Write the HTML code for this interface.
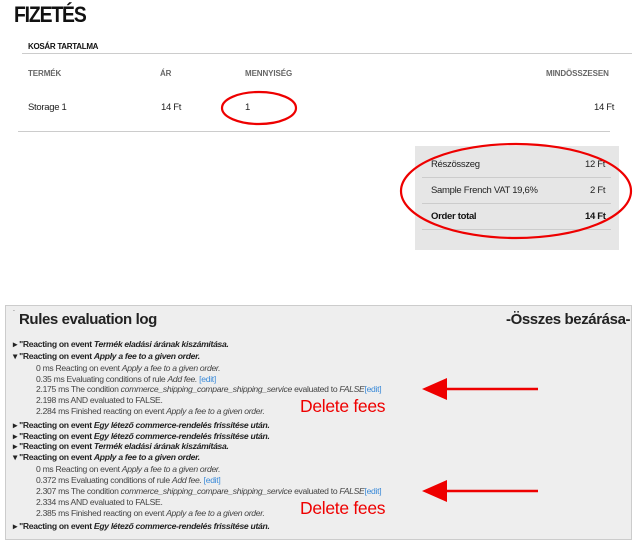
<!DOCTYPE html>
<html><head><meta charset="utf-8"><style>
body{margin:0;width:637px;height:542px;background:#fff;font-family:"Liberation Sans",sans-serif;position:relative;overflow:hidden;color:#222}
.a{position:absolute;white-space:nowrap}
.h{font-size:8px;color:#666;font-weight:bold;letter-spacing:-0.1px}
.t{font-size:9.5px;letter-spacing:-0.3px}
.l{position:absolute;height:1px;background:#ccc}
.log{font-size:8.6px;letter-spacing:-0.3px;line-height:10px}
.ev{color:#222;font-weight:bold}
.ch{color:#444}
.ed{color:#3a8ad8}
</style></head><body>
<div class="a" style="left:14px;top:2px;font-size:22px;font-weight:bold;letter-spacing:-1.3px;color:#111;transform:scaleX(0.88);transform-origin:0 0">FIZETÉS</div>
<div class="a" style="left:28px;top:42px;font-size:8px;font-weight:bold;letter-spacing:-0.3px;color:#111">KOSÁR TARTALMA</div>
<div class="l" style="left:22px;top:53px;width:610px"></div>
<div class="a h" style="left:28px;top:69px">TERMÉK</div>
<div class="a h" style="left:160px;top:69px">ÁR</div>
<div class="a h" style="left:245px;top:69px">MENNYISÉG</div>
<div class="a h" style="left:546px;top:69px">MINDÖSSZESEN</div>
<div class="a t" style="left:28px;top:102px">Storage 1</div>
<div class="a t" style="left:161px;top:102px">14 Ft</div>
<div class="a t" style="left:245px;top:102px">1</div>
<div class="a t" style="left:594px;top:102px">14 Ft</div>
<div class="l" style="left:18px;top:131px;width:592px"></div>
<div style="position:absolute;left:415px;top:146px;width:204px;height:104px;background:#e6e6e6"></div>
<div class="a t" style="left:431px;top:159px">Részösszeg</div>
<div class="a t" style="left:585px;top:159px">12 Ft</div>
<div class="l" style="left:422px;top:177px;width:189px"></div>
<div class="a t" style="left:431px;top:185px">Sample French VAT 19,6%</div>
<div class="a t" style="left:590px;top:185px">2 Ft</div>
<div class="l" style="left:422px;top:203px;width:189px"></div>
<div class="a t" style="left:431px;top:211px;font-weight:bold;color:#111">Order total</div>
<div class="a t" style="left:585px;top:211px;font-weight:bold;color:#111">14 Ft</div>
<div class="l" style="left:422px;top:229px;width:189px"></div>
<svg style="position:absolute;left:0;top:0" width="637" height="300">
<ellipse cx="259" cy="108" rx="37" ry="16" fill="none" stroke="#e00" stroke-width="2.2"/>
<ellipse cx="516" cy="191" rx="115" ry="47" fill="none" stroke="#e00" stroke-width="2.2"/>
</svg>
<div style="position:absolute;left:5px;top:305px;width:625px;height:233px;background:#eee;border:1px solid #ccc"></div>
<div class="a" style="left:13px;top:309px;font-size:8px">&#729;</div>
<div class="a" style="left:19px;top:311px;font-size:15px;font-weight:bold;color:#222;letter-spacing:-0.4px">Rules evaluation log</div>
<div class="a" style="left:506px;top:311px;font-size:15px;font-weight:bold;color:#222;letter-spacing:-0.4px">-Összes bezárása-</div>
<div class="log">
<div class="a ev" style="left:13px;top:339px">▸ "Reacting on event <i>Termék eladási árának kiszámítása.</i></div>
<div class="a ev" style="left:13px;top:351px">▾ "Reacting on event <i>Apply a fee to a given order.</i></div>
<div class="a ch" style="left:36px;top:363px">0 ms Reacting on event <i>Apply a fee to a given order.</i></div>
<div class="a ch" style="left:36px;top:374px">0.35 ms Evaluating conditions of rule <i>Add fee.</i> <span class="ed">[edit]</span></div>
<div class="a ch" style="left:36px;top:384px">2.175 ms The condition <i>commerce_shipping_compare_shipping_service</i> evaluated to <i>FALSE</i><span class="ed">[edit]</span></div>
<div class="a ch" style="left:36px;top:395px">2.198 ms AND evaluated to FALSE.</div>
<div class="a ch" style="left:36px;top:406px">2.284 ms Finished reacting on event <i>Apply a fee to a given order.</i></div>
<div class="a ev" style="left:13px;top:420px">▸ "Reacting on event <i>Egy létező commerce-rendelés frissítése után.</i></div>
<div class="a ev" style="left:13px;top:431px">▸ "Reacting on event <i>Egy létező commerce-rendelés frissítése után.</i></div>
<div class="a ev" style="left:13px;top:441px">▸ "Reacting on event <i>Termék eladási árának kiszámítása.</i></div>
<div class="a ev" style="left:13px;top:452px">▾ "Reacting on event <i>Apply a fee to a given order.</i></div>
<div class="a ch" style="left:36px;top:464px">0 ms Reacting on event <i>Apply a fee to a given order.</i></div>
<div class="a ch" style="left:36px;top:475px">0.372 ms Evaluating conditions of rule <i>Add fee.</i> <span class="ed">[edit]</span></div>
<div class="a ch" style="left:36px;top:486px">2.307 ms The condition <i>commerce_shipping_compare_shipping_service</i> evaluated to <i>FALSE</i><span class="ed">[edit]</span></div>
<div class="a ch" style="left:36px;top:497px">2.334 ms AND evaluated to FALSE.</div>
<div class="a ch" style="left:36px;top:508px">2.385 ms Finished reacting on event <i>Apply a fee to a given order.</i></div>
<div class="a ev" style="left:13px;top:521px">▸ "Reacting on event <i>Egy létező commerce-rendelés frissítése után.</i></div>
</div>
<svg style="position:absolute;left:0;top:0" width="637" height="542">
<line x1="538" y1="389" x2="440" y2="389" stroke="#e00" stroke-width="2.5"/>
<polygon points="422,389 447,378 447,400" fill="#e00"/>
<line x1="538" y1="491" x2="440" y2="491" stroke="#e00" stroke-width="2.5"/>
<polygon points="422,491 447,480 447,502" fill="#e00"/>
</svg>
<div class="a" style="left:300px;top:396px;font-size:17.5px;color:#e00;letter-spacing:-0.3px">Delete fees</div>
<div class="a" style="left:300px;top:498px;font-size:17.5px;color:#e00;letter-spacing:-0.3px">Delete fees</div>
</body></html>
